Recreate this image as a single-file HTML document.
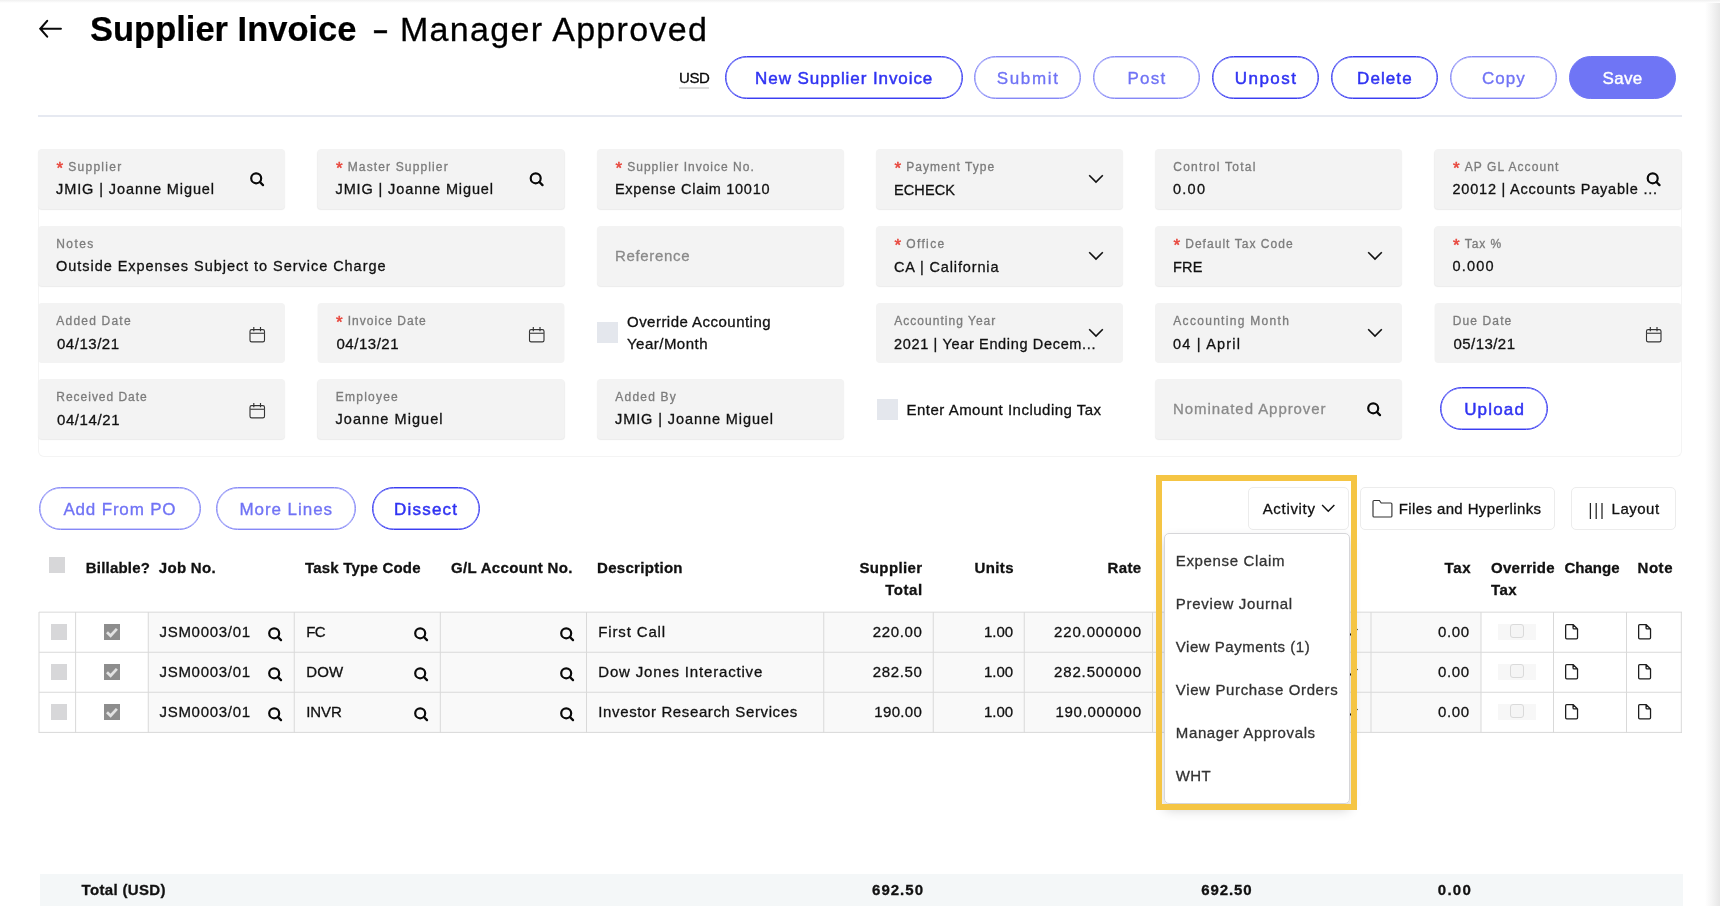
<!DOCTYPE html>
<html lang="en">
<head>
<meta charset="utf-8">
<title>Supplier Invoice - Manager Approved</title>
<style>
*{box-sizing:border-box;margin:0;padding:0}
html,body{width:1720px;height:906px;overflow:hidden;background:#fff}
body{will-change:transform;-webkit-text-stroke:.3px;font-family:"Liberation Sans",sans-serif;color:#080808;position:relative;font-size:15px}
.abs{position:absolute}
.topshade{position:absolute;left:0;top:0;width:1720px;height:3px;background:linear-gradient(#f0f0f0,#fff);z-index:3}
.rightshade{position:absolute;right:0;top:0;width:15px;height:906px;background:linear-gradient(90deg,#fff,#f6f6f6 40%,#e6e6e6)}
/* header */
.title{position:absolute;left:91px;top:6.5px;color:#000;height:44px;line-height:44px;white-space:nowrap;font-size:36px}
.title b{font-size:34.5px;font-weight:700;letter-spacing:0;margin-left:-1px;-webkit-text-stroke:.2px}
.title span{position:absolute;top:0;font-size:34px;letter-spacing:1.3px}
.hr{position:absolute;left:38px;width:1644px;height:2px;background:#e6e9f1}
.btn{position:absolute;top:56px;height:43px;border:1px solid #3b3ef2;box-shadow:inset 0 0 0 .5px #4a4df3;border-radius:22px;color:#3033f2;font-size:17px;line-height:41px;padding-top:1px;-webkit-text-stroke:.48px;text-align:center;white-space:nowrap;background:#fff}
.btn.dis{border-color:#8588f7;box-shadow:inset 0 0 0 .5px #9a9cf8;color:#7073f5;-webkit-text-stroke:.33px}
.btn.fill{background:#6f75f5;border-color:#6f75f5;box-shadow:none;color:#fff;-webkit-text-stroke:.4px}
/* fields */
.f{position:absolute;width:247px;height:60px;background:#f3f3f3;border-radius:4px;box-shadow:0 1px 1px #ebebeb}
.f .l{position:absolute;left:18px;top:11px;font-size:12px;line-height:15px;color:#7c7c7c;white-space:nowrap;letter-spacing:.35px}
.f i{position:absolute;left:18.6px;top:9.5px;font-style:normal;font-size:17px;line-height:20px;color:#e8463c;-webkit-text-stroke:.5px #e8463c}
.f .v{position:absolute;left:18px;top:30px;font-size:15px;line-height:18px;color:#111;white-space:nowrap;letter-spacing:.55px}
.f .p{position:absolute;left:18px;top:21px;font-size:15px;line-height:18px;color:#8a8a8a;white-space:nowrap;letter-spacing:.6px}
.cb{position:absolute;width:21px;height:21px;background:#e4e7ed}
.cbl{position:absolute;font-size:15px;line-height:21.5px;color:#111;letter-spacing:.45px}

.ic{position:absolute;overflow:visible}
.tb{position:absolute;height:43px;border:1px solid #ececec;border-radius:5px;background:#fff}
.tb span{position:absolute;top:11.5px;font-size:15px;line-height:18px;white-space:nowrap;color:#111}
.th{position:absolute;font-size:15px;line-height:20px;font-weight:700;white-space:nowrap;color:#111}
.td{position:absolute;font-size:15px;line-height:20px;white-space:nowrap;color:#111}
.hcb{position:absolute;width:16px;height:16px;background:#d7d7d9}
.ocb{position:absolute;width:38px;height:16px;background:#f7f7f7}
.ocb b{position:absolute;left:12px;top:0;width:14px;height:14px;border:1px solid #dadada;border-radius:3px;background:#f5f5f5}
.tblbg{position:absolute;background:#f9f9f9}
.hl{position:absolute;height:1px;background:#d9d9d9}
.vl{position:absolute;width:1px;background:#d9d9d9}
.tot{position:absolute;background:#f4f7f8}
.ybox{position:absolute;border:6px solid #f5c544;background:transparent}
.menu{position:absolute;background:#fff;border:1px solid #d6d6d9;border-radius:5px}
.msh{position:absolute;border-radius:5px;box-shadow:0 6px 12px rgba(0,0,0,.18)}
.mi{position:absolute;left:10.4px;font-size:15px;line-height:20px;color:#333;white-space:nowrap}
</style>
</head>
<body>
<div class="topshade"></div>
<div class="rightshade"></div>

<!-- header -->
<svg class="abs" style="left:36px;top:16px" width="30" height="26" viewBox="0 0 30 26"><path d="M24.9 12.75H4.6M11.2 4.9L4.3 12.75L11.2 20.6" fill="none" stroke="#0a0a0a" stroke-width="2.1" stroke-linecap="round" stroke-linejoin="miter"/></svg>
<div class="title"><b>Supplier Invoice</b><span style="left:280.5px;letter-spacing:0;transform:scaleX(1.5);transform-origin:0 0;-webkit-text-stroke:.5px">-</span><span style="left:309px">Manager Approved</span></div>

<div class="abs" style="left:679px;top:67px;font-size:15px;line-height:19px;padding-top:1px;border-bottom:2px solid #dcdcdc;letter-spacing:-.4px">USD</div>
<!-- HBTN -->
<div class="btn " style="left:724.7px;top:56px;width:238px;letter-spacing:0.92px;text-indent:0.92px">New Supplier Invoice</div>
<div class="btn dis" style="left:973.6px;top:56px;width:107.5px;letter-spacing:1.66px;text-indent:1.66px">Submit</div>
<div class="btn dis" style="left:1092.6px;top:56px;width:107.5px;letter-spacing:1.19px;text-indent:1.19px">Post</div>
<div class="btn " style="left:1211.6px;top:56px;width:107.5px;letter-spacing:1.47px;text-indent:1.47px">Unpost</div>
<div class="btn " style="left:1330.6px;top:56px;width:107.5px;letter-spacing:1.09px;text-indent:1.09px">Delete</div>
<div class="btn dis" style="left:1449.6px;top:56px;width:107.5px;letter-spacing:0.97px;text-indent:0.97px">Copy</div>
<div class="btn fill" style="left:1568.6px;top:56px;width:107.5px;letter-spacing:0.35px;text-indent:0.35px">Save</div>
<!-- /HBTN -->
<div class="hr" style="top:115px"></div>

<!-- FIELDS -->
<div class="abs" style="left:38px;top:152px;width:1644px;height:305px;border:1px solid #f4f4f4;border-top:none;border-radius:0 0 6px 6px"></div>
<div class="f" style="left:38px;top:149px;width:247px"><i>*</i><div class="l" style="left:30.2px;letter-spacing:1.28px">Supplier</div><div class="v" style="top:30.5px;left:18px;font-size:14.5px;letter-spacing:0.91px">JMIG | Joanne Miguel</div><svg class="ic" style="left:211.5px;top:23px" width="16" height="16" viewBox="0 0 16 16"><g fill="none" stroke="#fdfdfd" stroke-width="3.6" stroke-linecap="round" opacity=".8"><circle cx="6.2" cy="6.3" r="5"/><path d="M9.9 10L13 13.1"/></g><g fill="none" stroke="#0a0a0a" stroke-linecap="round"><circle cx="6.2" cy="6.3" r="5" stroke-width="2.2"/><path d="M9.9 10L13 13.1" stroke-width="2.4"/></g></svg></div>
<div class="f" style="left:318px;top:149px;width:247px;transform:translateX(-.5px)"><i>*</i><div class="l" style="left:30.2px;letter-spacing:1.14px">Master Supplier</div><div class="v" style="top:30.5px;left:18px;font-size:14.5px;letter-spacing:0.88px">JMIG | Joanne Miguel</div><svg class="ic" style="left:211.5px;top:23px" width="16" height="16" viewBox="0 0 16 16"><g fill="none" stroke="#fdfdfd" stroke-width="3.6" stroke-linecap="round" opacity=".8"><circle cx="6.2" cy="6.3" r="5"/><path d="M9.9 10L13 13.1"/></g><g fill="none" stroke="#0a0a0a" stroke-linecap="round"><circle cx="6.2" cy="6.3" r="5" stroke-width="2.2"/><path d="M9.9 10L13 13.1" stroke-width="2.4"/></g></svg></div>
<div class="f" style="left:597px;top:149px;width:247px"><i>*</i><div class="l" style="left:30.2px;letter-spacing:1.01px">Supplier Invoice No.</div><div class="v" style="top:30.5px;left:18px;font-size:14.5px;letter-spacing:0.7px">Expense Claim 10010</div></div>
<div class="f" style="left:876px;top:149px;width:247px"><i>*</i><div class="l" style="left:30.2px;letter-spacing:1.05px">Payment Type</div><div class="v" style="top:32px;left:18px;font-size:14.5px;letter-spacing:0.11px">ECHECK</div><svg class="ic" style="left:212.2px;top:25px" width="16" height="10" viewBox="0 0 16 10"><path d="M1.2 1.2L8 8L14.8 1.2" fill="none" stroke="#111" stroke-width="1.6"/></svg></div>
<div class="f" style="left:1155px;top:149px;width:247px"><div class="l" style="left:18.3px;letter-spacing:1.24px">Control Total</div><div class="v" style="top:30.5px;left:18px;font-size:14.5px;letter-spacing:1.26px">0.00</div></div>
<div class="f" style="left:1435px;top:149px;width:247px;transform:translateX(-.5px)"><i>*</i><div class="l" style="left:30.2px;letter-spacing:1.07px">AP GL Account</div><div class="v" style="top:30.5px;left:18px;font-size:14.5px;letter-spacing:0.78px">20012 | Accounts Payable ...</div><svg class="ic" style="left:211.8px;top:23px" width="16" height="16" viewBox="0 0 16 16"><g fill="none" stroke="#fdfdfd" stroke-width="3.6" stroke-linecap="round" opacity=".8"><circle cx="6.2" cy="6.3" r="5"/><path d="M9.9 10L13 13.1"/></g><g fill="none" stroke="#0a0a0a" stroke-linecap="round"><circle cx="6.2" cy="6.3" r="5" stroke-width="2.2"/><path d="M9.9 10L13 13.1" stroke-width="2.4"/></g></svg></div>
<div class="f" style="left:38px;top:226px;width:527px"><div class="l" style="left:18.3px;letter-spacing:1.41px">Notes</div><div class="v" style="top:30.5px;left:18px;font-size:14.5px;letter-spacing:0.96px">Outside Expenses Subject to Service Charge</div></div>
<div class="f" style="left:597px;top:226px;width:247px"><div class="p" style="letter-spacing:0.66px">Reference</div></div>
<div class="f" style="left:876px;top:226px;width:247px"><i>*</i><div class="l" style="left:30.2px;letter-spacing:1.38px">Office</div><div class="v" style="top:32px;left:18px;font-size:14.5px;letter-spacing:0.86px">CA | California</div><svg class="ic" style="left:212.2px;top:25px" width="16" height="10" viewBox="0 0 16 10"><path d="M1.2 1.2L8 8L14.8 1.2" fill="none" stroke="#111" stroke-width="1.6"/></svg></div>
<div class="f" style="left:1155px;top:226px;width:247px"><i>*</i><div class="l" style="left:30.2px;letter-spacing:1.04px">Default Tax Code</div><div class="v" style="top:32px;left:18px;font-size:14.5px;letter-spacing:0.25px">FRE</div><svg class="ic" style="left:212.2px;top:25px" width="16" height="10" viewBox="0 0 16 10"><path d="M1.2 1.2L8 8L14.8 1.2" fill="none" stroke="#111" stroke-width="1.6"/></svg></div>
<div class="f" style="left:1435px;top:226px;width:247px;transform:translateX(-.5px)"><i>*</i><div class="l" style="left:30.2px;letter-spacing:0.95px">Tax %</div><div class="v" style="top:30.5px;left:18px;font-size:14.5px;letter-spacing:1.18px">0.000</div></div>
<div class="f" style="left:38px;top:303px;width:247px;box-shadow:none"><div class="l" style="left:18.3px;letter-spacing:1.21px">Added Date</div><div class="v" style="top:32px;left:19px;font-size:15px;letter-spacing:0.52px">04/13/21</div><svg class="ic" style="left:209.7px;top:22.7px" width="19" height="18" viewBox="0 0 19 18"><g fill="none" stroke="#fcfcfc" stroke-width="2.6" opacity=".7"><rect x="2" y="3.6" width="14.5" height="12.2" rx="1.6"/></g><g fill="none" stroke="#333" stroke-width="1.15"><rect x="2" y="3.6" width="14.5" height="12.2" rx="1.6"/><path d="M5.8 1.1V5.3M12.5 1.1V5.3"/><path d="M2 7.3H16.5" stroke="#555" stroke-width="1.3"/></g></svg></div>
<div class="f" style="left:318px;top:303px;width:247px;box-shadow:none;transform:translateX(-.5px)"><i>*</i><div class="l" style="left:30.2px;letter-spacing:1.03px">Invoice Date</div><div class="v" style="top:32px;left:19px;font-size:15px;letter-spacing:0.52px">04/13/21</div><svg class="ic" style="left:209.7px;top:22.7px" width="19" height="18" viewBox="0 0 19 18"><g fill="none" stroke="#fcfcfc" stroke-width="2.6" opacity=".7"><rect x="2" y="3.6" width="14.5" height="12.2" rx="1.6"/></g><g fill="none" stroke="#333" stroke-width="1.15"><rect x="2" y="3.6" width="14.5" height="12.2" rx="1.6"/><path d="M5.8 1.1V5.3M12.5 1.1V5.3"/><path d="M2 7.3H16.5" stroke="#555" stroke-width="1.3"/></g></svg></div>
<div class="f" style="left:876px;top:303px;width:247px;box-shadow:none"><div class="l" style="left:18.3px;letter-spacing:1.02px">Accounting Year</div><div class="v" style="top:32px;left:18px;font-size:14.5px;letter-spacing:0.66px">2021 | Year Ending Decem...</div><svg class="ic" style="left:212.2px;top:25px" width="16" height="10" viewBox="0 0 16 10"><path d="M1.2 1.2L8 8L14.8 1.2" fill="none" stroke="#111" stroke-width="1.6"/></svg></div>
<div class="f" style="left:1155px;top:303px;width:247px;box-shadow:none"><div class="l" style="left:18.3px;letter-spacing:1.3px">Accounting Month</div><div class="v" style="top:32px;left:18px;font-size:14.5px;letter-spacing:1.2px">04 | April</div><svg class="ic" style="left:212.2px;top:25px" width="16" height="10" viewBox="0 0 16 10"><path d="M1.2 1.2L8 8L14.8 1.2" fill="none" stroke="#111" stroke-width="1.6"/></svg></div>
<div class="f" style="left:1435px;top:303px;width:247px;box-shadow:none;transform:translateX(-.5px)"><div class="l" style="left:18.3px;letter-spacing:1.11px">Due Date</div><div class="v" style="top:32px;left:19px;font-size:15px;letter-spacing:0.44px">05/13/21</div><svg class="ic" style="left:209.7px;top:22.7px" width="19" height="18" viewBox="0 0 19 18"><g fill="none" stroke="#fcfcfc" stroke-width="2.6" opacity=".7"><rect x="2" y="3.6" width="14.5" height="12.2" rx="1.6"/></g><g fill="none" stroke="#333" stroke-width="1.15"><rect x="2" y="3.6" width="14.5" height="12.2" rx="1.6"/><path d="M5.8 1.1V5.3M12.5 1.1V5.3"/><path d="M2 7.3H16.5" stroke="#555" stroke-width="1.3"/></g></svg></div>
<div class="f" style="left:38px;top:379px;width:247px"><div class="l" style="left:18.3px;letter-spacing:0.98px">Received Date</div><div class="v" style="top:32px;left:19px;font-size:15px;letter-spacing:0.59px">04/14/21</div><svg class="ic" style="left:209.7px;top:22.7px" width="19" height="18" viewBox="0 0 19 18"><g fill="none" stroke="#fcfcfc" stroke-width="2.6" opacity=".7"><rect x="2" y="3.6" width="14.5" height="12.2" rx="1.6"/></g><g fill="none" stroke="#333" stroke-width="1.15"><rect x="2" y="3.6" width="14.5" height="12.2" rx="1.6"/><path d="M5.8 1.1V5.3M12.5 1.1V5.3"/><path d="M2 7.3H16.5" stroke="#555" stroke-width="1.3"/></g></svg></div>
<div class="f" style="left:318px;top:379px;width:247px;transform:translateX(-.5px)"><div class="l" style="left:18.3px;letter-spacing:1.23px">Employee</div><div class="v" style="top:30.5px;left:18px;font-size:14.5px;letter-spacing:1.06px">Joanne Miguel</div></div>
<div class="f" style="left:597px;top:379px;width:247px"><div class="l" style="left:18.3px;letter-spacing:1.21px">Added By</div><div class="v" style="top:30.5px;left:18px;font-size:14.5px;letter-spacing:0.91px">JMIG | Joanne Miguel</div></div>
<div class="f" style="left:1155px;top:379px;width:247px"><div class="p" style="letter-spacing:0.93px">Nominated Approver</div><svg class="ic" style="left:211.5px;top:23px" width="16" height="16" viewBox="0 0 16 16"><g fill="none" stroke="#fdfdfd" stroke-width="3.6" stroke-linecap="round" opacity=".8"><circle cx="6.2" cy="6.3" r="5"/><path d="M9.9 10L13 13.1"/></g><g fill="none" stroke="#0a0a0a" stroke-linecap="round"><circle cx="6.2" cy="6.3" r="5" stroke-width="2.2"/><path d="M9.9 10L13 13.1" stroke-width="2.4"/></g></svg></div>
<div class="cb" style="left:597px;top:322px"></div>
<div class="cbl" style="left:627px;top:311px;letter-spacing:0.47px">Override Accounting<br><span style="letter-spacing:0.48px">Year/Month</span></div>
<div class="cb" style="left:876.5px;top:399px"></div>
<div class="cbl" style="left:906.5px;top:398.5px;letter-spacing:0.49px">Enter Amount Including Tax</div>
<div class="btn " style="left:1440px;top:387px;width:108px;letter-spacing:1.17px;text-indent:1.17px">Upload</div>
<!-- /FIELDS -->
<!-- GRID -->
<div class="btn dis" style="left:38.5px;top:487px;width:162px;letter-spacing:0.83px;text-indent:0.83px">Add From PO</div>
<div class="btn dis" style="left:215.5px;top:487px;width:140.5px;letter-spacing:0.95px;text-indent:0.95px">More Lines</div>
<div class="btn " style="left:371.5px;top:487px;width:108px;letter-spacing:1.24px;text-indent:1.24px">Dissect</div>
<div class="tb" style="left:1248.2px;top:487px;width:101.3px"><span style="left:13.5px;letter-spacing:0.68px">Activity</span><svg class="ic" style="left:72.3px;top:15.5px" width="14.5" height="9" viewBox="0 0 16 10"><path d="M1.2 1.2L8 8L14.8 1.2" fill="none" stroke="#111" stroke-width="1.6"/></svg></div>
<div class="tb" style="left:1360px;top:487px;width:194.5px"><svg class="ic" style="left:11.2px;top:11.4px" width="21" height="19" viewBox="0 0 21 19"><path d="M1 2.6Q1 1.5 2.1 1.5H7.4L9.2 4H18.8Q19.9 4 19.9 5.1V16.9Q19.9 18 18.8 18H2.1Q1 18 1 16.9Z" fill="none" stroke="#333" stroke-width="1.15"/></svg><span style="left:37.8px;letter-spacing:0.38px">Files and Hyperlinks</span></div>
<div class="tb" style="left:1571.4px;top:487px;width:104.4px"><svg class="ic" style="left:16px;top:14.5px" width="16" height="16" viewBox="0 0 16 16"><path d="M2.4 0V16M8.2 0V16M14 0V16" stroke="#222" stroke-width="1.25"/></svg><span style="left:39.2px;letter-spacing:0.49px">Layout</span></div>
<div class="hcb" style="left:49.3px;top:557px"></div>
<div class="th" style="left:85.8px;top:558px;letter-spacing:0.19px">Billable?</div>
<div class="th" style="left:158.8px;top:558px;letter-spacing:0.3px">Job No.</div>
<div class="th" style="left:305px;top:558px;letter-spacing:0.21px">Task Type Code</div>
<div class="th" style="left:451px;top:558px;letter-spacing:0.34px">G/L Account No.</div>
<div class="th" style="left:597px;top:558px;letter-spacing:0.3px">Description</div>
<div class="th" style="right:797.8px;top:558px;letter-spacing:0.4px;margin-right:-0.4px">Supplier</div>
<div class="th" style="right:797.8px;top:579.5px;letter-spacing:0.57px;margin-right:-0.57px">Total</div>
<div class="th" style="right:706.5px;top:558px;letter-spacing:0.38px;margin-right:-0.38px">Units</div>
<div class="th" style="right:578.8px;top:558px;letter-spacing:0.43px;margin-right:-0.43px">Rate</div>
<div class="th" style="right:249.5px;top:558px;letter-spacing:0.63px;margin-right:-0.63px">Tax</div>
<div class="th" style="left:1491px;top:558px;letter-spacing:0.26px">Override</div>
<div class="th" style="left:1491px;top:579.5px;letter-spacing:0.38px">Tax</div>
<div class="th" style="left:1564.5px;top:558px;letter-spacing:-0.0px">Change</div>
<div class="th" style="left:1637.5px;top:558px;letter-spacing:0.55px">Note</div>
<div class="tblbg" style="left:148px;top:612px;width:1333px;height:120.5px"></div>
<div class="hl" style="left:38.5px;top:0;width:1643.5px;transform:translateY(611.65px)"></div>
<div class="hl" style="left:38.5px;top:0;width:1643.5px;transform:translateY(651.75px)"></div>
<div class="hl" style="left:38.5px;top:0;width:1643.5px;transform:translateY(691.75px)"></div>
<div class="hl" style="left:38.5px;top:0;width:1643.5px;transform:translateY(731.9px)"></div>
<div class="vl" style="left:0;top:612px;height:121px;transform:translateX(38.5px)"></div>
<div class="vl" style="left:0;top:612px;height:121px;transform:translateX(75.1px)"></div>
<div class="vl" style="left:0;top:612px;height:121px;transform:translateX(147.75px)"></div>
<div class="vl" style="left:0;top:612px;height:121px;transform:translateX(293.75px)"></div>
<div class="vl" style="left:0;top:612px;height:121px;transform:translateX(439.8px)"></div>
<div class="vl" style="left:0;top:612px;height:121px;transform:translateX(586.0px)"></div>
<div class="vl" style="left:0;top:612px;height:121px;transform:translateX(823.25px)"></div>
<div class="vl" style="left:0;top:612px;height:121px;transform:translateX(932.75px)"></div>
<div class="vl" style="left:0;top:612px;height:121px;transform:translateX(1023.75px)"></div>
<div class="vl" style="left:0;top:612px;height:121px;transform:translateX(1152.0px)"></div>
<div class="vl" style="left:0;top:612px;height:121px;transform:translateX(1370.5px)"></div>
<div class="vl" style="left:0;top:612px;height:121px;transform:translateX(1480.5px)"></div>
<div class="vl" style="left:0;top:612px;height:121px;transform:translateX(1553.0px)"></div>
<div class="vl" style="left:0;top:612px;height:121px;transform:translateX(1626.0px)"></div>
<div class="vl" style="left:0;top:612px;height:121px;transform:translateX(1680.8px)"></div>
<div class="hcb" style="left:50.5px;top:624.2px"></div>
<svg class="ic" style="left:104px;top:624.2px" width="16" height="16" viewBox="0 0 16 16"><rect width="16" height="16" fill="#8d8d8d"/><path d="M3 8.3L6.6 11.7L12.9 4.9" fill="none" stroke="#e2e2e2" stroke-width="2.8"/></svg>
<div class="td" style="left:159.5px;top:621.8px;letter-spacing:0.7px">JSM0003/01</div>
<svg class="ic" style="left:267.5px;top:626.8px" width="16" height="16" viewBox="0 0 16 16"><g fill="none" stroke="#fdfdfd" stroke-width="3.6" stroke-linecap="round" opacity=".8"><circle cx="6.2" cy="6.3" r="5"/><path d="M9.9 10L13 13.1"/></g><g fill="none" stroke="#0a0a0a" stroke-linecap="round"><circle cx="6.2" cy="6.3" r="5" stroke-width="2.2"/><path d="M9.9 10L13 13.1" stroke-width="2.4"/></g></svg>
<div class="td" style="left:306.3px;top:621.8px;letter-spacing:-0.7px">FC</div>
<svg class="ic" style="left:413.7px;top:626.8px" width="16" height="16" viewBox="0 0 16 16"><g fill="none" stroke="#fdfdfd" stroke-width="3.6" stroke-linecap="round" opacity=".8"><circle cx="6.2" cy="6.3" r="5"/><path d="M9.9 10L13 13.1"/></g><g fill="none" stroke="#0a0a0a" stroke-linecap="round"><circle cx="6.2" cy="6.3" r="5" stroke-width="2.2"/><path d="M9.9 10L13 13.1" stroke-width="2.4"/></g></svg>
<svg class="ic" style="left:559.7px;top:626.8px" width="16" height="16" viewBox="0 0 16 16"><g fill="none" stroke="#fdfdfd" stroke-width="3.6" stroke-linecap="round" opacity=".8"><circle cx="6.2" cy="6.3" r="5"/><path d="M9.9 10L13 13.1"/></g><g fill="none" stroke="#0a0a0a" stroke-linecap="round"><circle cx="6.2" cy="6.3" r="5" stroke-width="2.2"/><path d="M9.9 10L13 13.1" stroke-width="2.4"/></g></svg>
<div class="td" style="left:598.3px;top:621.8px;letter-spacing:0.85px">First Call</div>
<div class="td" style="right:798.2px;top:621.8px;letter-spacing:0.62px;margin-right:-0.62px">220.00</div>
<div class="td" style="right:707px;top:621.8px;letter-spacing:-0.07px;margin-right:--0.07px">1.00</div>
<div class="td" style="right:579px;top:621.8px;letter-spacing:0.86px;margin-right:-0.86px">220.000000</div>
<svg class="ic" style="left:1344.3px;top:627.5px" width="14.5" height="9" viewBox="0 0 16 10"><path d="M1.2 1.2L8 8L14.8 1.2" fill="none" stroke="#111" stroke-width="1.6"/></svg>
<div class="td" style="right:251px;top:621.8px;letter-spacing:0.6px;margin-right:-0.6px">0.00</div>
<div class="ocb" style="left:1498px;top:624.0px"><b></b></div>
<svg class="ic" style="left:1563.7px;top:623.1px" width="15.1" height="17" viewBox="0 0 16 18"><path d="M2.9 1.65H9.6L14.35 6.3V15.6Q14.35 16.75 13.2 16.75H2.9Q1.75 16.75 1.75 15.6V2.8Q1.75 1.65 2.9 1.65ZM9.6 1.65V5.2Q9.6 6.3 10.7 6.3H14.35" fill="none" stroke="#1c1c1c" stroke-width="1.35" stroke-linejoin="round"/></svg>
<svg class="ic" style="left:1636.8px;top:623.1px" width="15.1" height="17" viewBox="0 0 16 18"><path d="M2.9 1.65H9.6L14.35 6.3V15.6Q14.35 16.75 13.2 16.75H2.9Q1.75 16.75 1.75 15.6V2.8Q1.75 1.65 2.9 1.65ZM9.6 1.65V5.2Q9.6 6.3 10.7 6.3H14.35" fill="none" stroke="#1c1c1c" stroke-width="1.35" stroke-linejoin="round"/></svg>
<div class="hcb" style="left:50.5px;top:664.3000000000001px"></div>
<svg class="ic" style="left:104px;top:664.3000000000001px" width="16" height="16" viewBox="0 0 16 16"><rect width="16" height="16" fill="#8d8d8d"/><path d="M3 8.3L6.6 11.7L12.9 4.9" fill="none" stroke="#e2e2e2" stroke-width="2.8"/></svg>
<div class="td" style="left:159.5px;top:661.9px;letter-spacing:0.7px">JSM0003/01</div>
<svg class="ic" style="left:267.5px;top:666.9px" width="16" height="16" viewBox="0 0 16 16"><g fill="none" stroke="#fdfdfd" stroke-width="3.6" stroke-linecap="round" opacity=".8"><circle cx="6.2" cy="6.3" r="5"/><path d="M9.9 10L13 13.1"/></g><g fill="none" stroke="#0a0a0a" stroke-linecap="round"><circle cx="6.2" cy="6.3" r="5" stroke-width="2.2"/><path d="M9.9 10L13 13.1" stroke-width="2.4"/></g></svg>
<div class="td" style="left:306.3px;top:661.9px;letter-spacing:0.16px">DOW</div>
<svg class="ic" style="left:413.7px;top:666.9px" width="16" height="16" viewBox="0 0 16 16"><g fill="none" stroke="#fdfdfd" stroke-width="3.6" stroke-linecap="round" opacity=".8"><circle cx="6.2" cy="6.3" r="5"/><path d="M9.9 10L13 13.1"/></g><g fill="none" stroke="#0a0a0a" stroke-linecap="round"><circle cx="6.2" cy="6.3" r="5" stroke-width="2.2"/><path d="M9.9 10L13 13.1" stroke-width="2.4"/></g></svg>
<svg class="ic" style="left:559.7px;top:666.9px" width="16" height="16" viewBox="0 0 16 16"><g fill="none" stroke="#fdfdfd" stroke-width="3.6" stroke-linecap="round" opacity=".8"><circle cx="6.2" cy="6.3" r="5"/><path d="M9.9 10L13 13.1"/></g><g fill="none" stroke="#0a0a0a" stroke-linecap="round"><circle cx="6.2" cy="6.3" r="5" stroke-width="2.2"/><path d="M9.9 10L13 13.1" stroke-width="2.4"/></g></svg>
<div class="td" style="left:598.3px;top:661.9px;letter-spacing:0.82px">Dow Jones Interactive</div>
<div class="td" style="right:798.2px;top:661.9px;letter-spacing:0.62px;margin-right:-0.62px">282.50</div>
<div class="td" style="right:707px;top:661.9px;letter-spacing:-0.07px;margin-right:--0.07px">1.00</div>
<div class="td" style="right:579px;top:661.9px;letter-spacing:0.86px;margin-right:-0.86px">282.500000</div>
<svg class="ic" style="left:1344.3px;top:667.6px" width="14.5" height="9" viewBox="0 0 16 10"><path d="M1.2 1.2L8 8L14.8 1.2" fill="none" stroke="#111" stroke-width="1.6"/></svg>
<div class="td" style="right:251px;top:661.9px;letter-spacing:0.6px;margin-right:-0.6px">0.00</div>
<div class="ocb" style="left:1498px;top:664.1px"><b></b></div>
<svg class="ic" style="left:1563.7px;top:663.2px" width="15.1" height="17" viewBox="0 0 16 18"><path d="M2.9 1.65H9.6L14.35 6.3V15.6Q14.35 16.75 13.2 16.75H2.9Q1.75 16.75 1.75 15.6V2.8Q1.75 1.65 2.9 1.65ZM9.6 1.65V5.2Q9.6 6.3 10.7 6.3H14.35" fill="none" stroke="#1c1c1c" stroke-width="1.35" stroke-linejoin="round"/></svg>
<svg class="ic" style="left:1636.8px;top:663.2px" width="15.1" height="17" viewBox="0 0 16 18"><path d="M2.9 1.65H9.6L14.35 6.3V15.6Q14.35 16.75 13.2 16.75H2.9Q1.75 16.75 1.75 15.6V2.8Q1.75 1.65 2.9 1.65ZM9.6 1.65V5.2Q9.6 6.3 10.7 6.3H14.35" fill="none" stroke="#1c1c1c" stroke-width="1.35" stroke-linejoin="round"/></svg>
<div class="hcb" style="left:50.5px;top:704.4000000000001px"></div>
<svg class="ic" style="left:104px;top:704.4000000000001px" width="16" height="16" viewBox="0 0 16 16"><rect width="16" height="16" fill="#8d8d8d"/><path d="M3 8.3L6.6 11.7L12.9 4.9" fill="none" stroke="#e2e2e2" stroke-width="2.8"/></svg>
<div class="td" style="left:159.5px;top:702.0px;letter-spacing:0.7px">JSM0003/01</div>
<svg class="ic" style="left:267.5px;top:707.0px" width="16" height="16" viewBox="0 0 16 16"><g fill="none" stroke="#fdfdfd" stroke-width="3.6" stroke-linecap="round" opacity=".8"><circle cx="6.2" cy="6.3" r="5"/><path d="M9.9 10L13 13.1"/></g><g fill="none" stroke="#0a0a0a" stroke-linecap="round"><circle cx="6.2" cy="6.3" r="5" stroke-width="2.2"/><path d="M9.9 10L13 13.1" stroke-width="2.4"/></g></svg>
<div class="td" style="left:306.3px;top:702.0px;letter-spacing:-0.11px">INVR</div>
<svg class="ic" style="left:413.7px;top:707.0px" width="16" height="16" viewBox="0 0 16 16"><g fill="none" stroke="#fdfdfd" stroke-width="3.6" stroke-linecap="round" opacity=".8"><circle cx="6.2" cy="6.3" r="5"/><path d="M9.9 10L13 13.1"/></g><g fill="none" stroke="#0a0a0a" stroke-linecap="round"><circle cx="6.2" cy="6.3" r="5" stroke-width="2.2"/><path d="M9.9 10L13 13.1" stroke-width="2.4"/></g></svg>
<svg class="ic" style="left:559.7px;top:707.0px" width="16" height="16" viewBox="0 0 16 16"><g fill="none" stroke="#fdfdfd" stroke-width="3.6" stroke-linecap="round" opacity=".8"><circle cx="6.2" cy="6.3" r="5"/><path d="M9.9 10L13 13.1"/></g><g fill="none" stroke="#0a0a0a" stroke-linecap="round"><circle cx="6.2" cy="6.3" r="5" stroke-width="2.2"/><path d="M9.9 10L13 13.1" stroke-width="2.4"/></g></svg>
<div class="td" style="left:598.3px;top:702.0px;letter-spacing:0.62px">Investor Research Services</div>
<div class="td" style="right:798.2px;top:702.0px;letter-spacing:0.32px;margin-right:-0.32px">190.00</div>
<div class="td" style="right:707px;top:702.0px;letter-spacing:-0.07px;margin-right:--0.07px">1.00</div>
<div class="td" style="right:579px;top:702.0px;letter-spacing:0.69px;margin-right:-0.69px">190.000000</div>
<svg class="ic" style="left:1344.3px;top:707.7px" width="14.5" height="9" viewBox="0 0 16 10"><path d="M1.2 1.2L8 8L14.8 1.2" fill="none" stroke="#111" stroke-width="1.6"/></svg>
<div class="td" style="right:251px;top:702.0px;letter-spacing:0.6px;margin-right:-0.6px">0.00</div>
<div class="ocb" style="left:1498px;top:704.2px"><b></b></div>
<svg class="ic" style="left:1563.7px;top:703.3000000000001px" width="15.1" height="17" viewBox="0 0 16 18"><path d="M2.9 1.65H9.6L14.35 6.3V15.6Q14.35 16.75 13.2 16.75H2.9Q1.75 16.75 1.75 15.6V2.8Q1.75 1.65 2.9 1.65ZM9.6 1.65V5.2Q9.6 6.3 10.7 6.3H14.35" fill="none" stroke="#1c1c1c" stroke-width="1.35" stroke-linejoin="round"/></svg>
<svg class="ic" style="left:1636.8px;top:703.3000000000001px" width="15.1" height="17" viewBox="0 0 16 18"><path d="M2.9 1.65H9.6L14.35 6.3V15.6Q14.35 16.75 13.2 16.75H2.9Q1.75 16.75 1.75 15.6V2.8Q1.75 1.65 2.9 1.65ZM9.6 1.65V5.2Q9.6 6.3 10.7 6.3H14.35" fill="none" stroke="#1c1c1c" stroke-width="1.35" stroke-linejoin="round"/></svg>
<div class="tot" style="left:39.5px;top:873.5px;width:1643px;height:40px"></div>
<div class="th" style="left:81.5px;top:880px;letter-spacing:0.35px">Total (USD)</div>
<div class="th" style="right:797px;top:880px;letter-spacing:1.02px;margin-right:-1.02px">692.50</div>
<div class="th" style="right:468.29999999999995px;top:880px;letter-spacing:0.92px;margin-right:-0.92px">692.50</div>
<div class="th" style="right:249.20000000000005px;top:880px;letter-spacing:1.27px;margin-right:-1.27px">0.00</div>
<!-- /GRID -->
<!-- DROPDOWN -->
<div class="msh" style="left:1164.4px;top:533px;width:185.8px;height:270.5px"></div>
<div class="ybox" style="left:1156.2px;top:474.8px;width:200.5px;height:335.6px"></div>
<div class="menu" style="left:1164.4px;top:533px;width:185.8px;height:270.5px">
<div class="mi" style="top:17px;letter-spacing:0.65px">Expense Claim</div>
<div class="mi" style="top:60px;letter-spacing:0.69px">Preview Journal</div>
<div class="mi" style="top:103px;letter-spacing:0.52px">View Payments (1)</div>
<div class="mi" style="top:146px;letter-spacing:0.64px">View Purchase Orders</div>
<div class="mi" style="top:189px;letter-spacing:0.63px">Manager Approvals</div>
<div class="mi" style="top:232px;letter-spacing:0.42px">WHT</div>
</div>
<!-- /DROPDOWN -->
</body>
</html>
